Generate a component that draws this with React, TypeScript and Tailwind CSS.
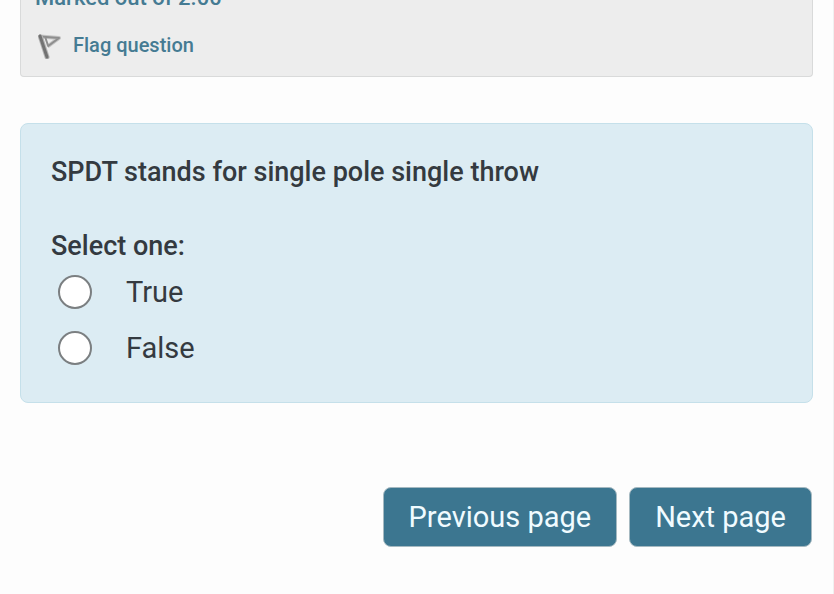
const answers = ["True", "False"];

function FlagIcon() {
  return (
    <svg width="26" height="28" viewBox="0 0 26 28" fill="none" aria-hidden="true">
      <path d="M5 5.5 L24 7 L12.500 15.500" stroke="#c4c4c4" strokeWidth="4" strokeLinejoin="round" />
      <path d="M5 5.5 L24 7 L12.500 15.500" stroke="#8e8e8e" strokeWidth="2" strokeLinejoin="round" />
      <path d="M10.500 7 L13 14.500" stroke="#8e8e8e" strokeWidth="2" />
      <path d="M5.500 6 L12 26" stroke="#b4b4b4" strokeWidth="5" strokeLinecap="round" />
      <path d="M5 5 L12 26" stroke="#727272" strokeWidth="3" strokeLinecap="round" />
    </svg>
  );
}

export default function App() {
  return (
    <main className="min-h-screen overflow-hidden border-r border-[#f0f0f0] bg-[#fdfdfd] pr-5 pl-5 font-['Roboto','Liberation_Sans',sans-serif] text-[#343a40]">
      <section className="overflow-hidden rounded-b-[4px] border border-t-0 border-[#d9dada] bg-[#ededed] pb-[17px] pl-[14px] text-[20px] leading-6 font-medium text-[#457b93]">
        <p className="-mt-[14px] text-[22px]">Marked out of 2.00</p>
        <a href="#flag" className="mt-[21px] flex items-center gap-3">
          <FlagIcon />
          <span>Flag question</span>
        </a>
      </section>

      <form>
        <section className="mt-[46px] rounded-[8px] border border-[#c5e0ea] bg-[#dcecf3] px-[30px] pt-8 pb-[26px]">
          <p className="text-[27px] leading-8 font-medium">SPDT stands for single pole single throw</p>
          <fieldset className="mt-[42px]">
            <legend className="mb-[2px] text-[27px] leading-8 font-medium">Select one:</legend>
            {answers.map((answer) => (
              <label key={answer} className="flex h-14 w-fit items-center gap-[34px] pl-[7px] text-[29px] leading-8">
                <input
                  type="radio"
                  name="answer"
                  value={answer}
                  className="size-[34px] shrink-0 appearance-none rounded-full border-2 border-[#7b7f81] bg-white checked:border-[10px] checked:border-[#3c7690]"
                />
                {answer}
              </label>
            ))}
          </fieldset>
        </section>

        <div className="mt-[84px] flex justify-end gap-3 pr-px text-[29px] leading-[58px] text-[#f0fbff]">
          <button type="button" className="rounded-[8px] border border-[#a5b9c1] bg-[#3c7690] px-[25px]">
            Previous page
          </button>
          <button type="button" className="rounded-[8px] border border-[#a5b9c1] bg-[#3c7690] px-[25px]">
            Next page
          </button>
        </div>
      </form>
    </main>
  );
}
